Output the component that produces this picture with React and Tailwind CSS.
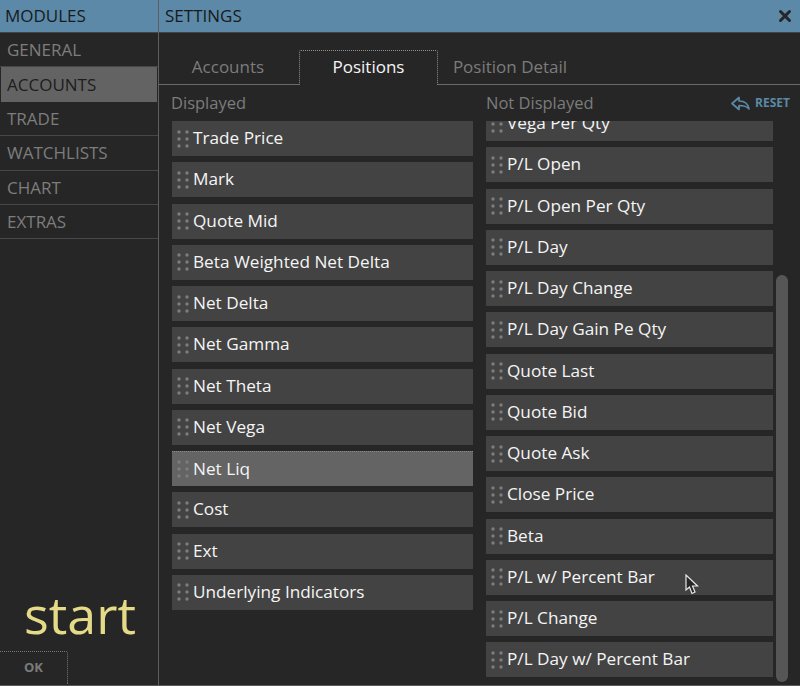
import { X } from "lucide-react";

const modules = ["GENERAL", "ACCOUNTS", "TRADE", "WATCHLISTS", "CHART", "EXTRAS"];
const displayed = [
  "Trade Price",
  "Mark",
  "Quote Mid",
  "Beta Weighted Net Delta",
  "Net Delta",
  "Net Gamma",
  "Net Theta",
  "Net Vega",
  "Net Liq",
  "Cost",
  "Ext",
  "Underlying Indicators",
];
const notDisplayed = [
  "Vega Per Qty",
  "P/L Open",
  "P/L Open Per Qty",
  "P/L Day",
  "P/L Day Change",
  "P/L Day Gain Pe Qty",
  "Quote Last",
  "Quote Bid",
  "Quote Ask",
  "Close Price",
  "Beta",
  "P/L w/ Percent Bar",
  "P/L Change",
  "P/L Day w/ Percent Bar",
];

function Grip() {
  return (
    <svg width="12" height="18" viewBox="0 0 12 18" className="shrink-0 fill-[#7d7d7d]">
      {[2, 9, 16].map((y) => (
        <g key={y}>
          <circle cx="2" cy={y} r="1.7" />
          <circle cx="10" cy={y} r="1.7" />
        </g>
      ))}
    </svg>
  );
}

function Row({ label, active }) {
  return (
    <div
      className={`flex h-[35px] shrink-0 items-center gap-[4px] pl-[5px] text-[17.2px] text-[#f5f5f5] ${
        active ? "border-t border-dotted border-[#8a8a8a] bg-[#646464]" : "bg-[#434343]"
      }`}
    >
      <Grip />
      <span className="whitespace-nowrap pb-px">{label}</span>
    </div>
  );
}

function Tab({ label, active, width }) {
  return (
    <div
      className={`flex h-[34px] items-center justify-center text-[17px] ${width} ${
        active
          ? "relative -mb-px h-[35px] rounded-t-[2px] border border-b-0 border-dotted border-[#8f8f8f] bg-[#262626] pb-[2px] text-[#f5f5f5]"
          : "text-[#7c7c7c]"
      }`}
    >
      {label}
    </div>
  );
}

export default function App() {
  return (
    <div
      className="flex h-[686px] w-[800px] overflow-hidden border-b border-[#5a5a5a] bg-[#262626]"
      style={{ fontFamily: '"Open Sans", sans-serif' }}
    >
      <aside className="flex w-[159px] shrink-0 flex-col border-r border-[#5f5f5f]">
        <div className="flex h-[33px] shrink-0 items-center border-b border-[#444] bg-[#5b89a7] pl-[5px] text-[17px] text-[#171b1e]">
          MODULES
        </div>
        <nav className="flex flex-col">
          {modules.map((name) => (
            <div
              key={name}
              className={
                name === "ACCOUNTS"
                  ? "mx-px flex h-[34.4px] items-center bg-[#636363] pl-[6px] text-[17px] text-[#1d1d1d]"
                  : "flex h-[34.4px] items-center border-b border-[#474747] pl-[7px] text-[17px] text-[#7d7d7d]"
              }
            >
              {name}
            </div>
          ))}
        </nav>
        <div className="mt-auto pb-[11px] pl-[2px] text-center text-[52px] leading-none text-[#e4da87]">
          start
        </div>
        <button
          type="button"
          className="mb-px flex h-[33px] w-[68px] items-center justify-center rounded-tr-[2px] border-r border-t border-dotted border-[#777] text-[13px] font-bold text-[#7b7b7b]"
        >
          OK
        </button>
      </aside>

      <main className="flex min-w-0 flex-1 flex-col">
        <div className="flex h-[33px] shrink-0 items-center justify-between border-b border-[#444] bg-[#5b89a7] pl-[6px] pr-[6px] text-[17px] text-[#171b1e]">
          SETTINGS
          <X size={18} strokeWidth={4} className="text-[#262626]" />
        </div>

        <div className="mt-[16px] flex h-[36px] shrink-0 items-end border-b border-[#6a6a6a]">
          <Tab label="Accounts" width="w-[140px] pr-[2px]" />
          <Tab label="Positions" active width="w-[139px]" />
          <Tab label="Position Detail" width="w-[144px]" />
        </div>

        <div className="flex min-h-0 flex-1 pl-[13px]">
          <section className="flex w-[302px] shrink-0 flex-col">
            <div className="-ml-px flex h-[36px] shrink-0 items-center text-[16.5px] text-[#7c7c7c]">
              Displayed
            </div>
            <div className="flex w-[301px] flex-col gap-[6.25px]">
              {displayed.map((item) => (
                <Row key={item} label={item} active={item === "Net Liq"} />
              ))}
            </div>
          </section>

          <section className="relative ml-[12px] flex min-w-0 flex-1 flex-col">
            <div className="flex h-[36px] shrink-0 items-center justify-between pr-[10px]">
              <span className="text-[16.5px] text-[#7c7c7c]">Not Displayed</span>
              <span className="flex items-center gap-[5px] text-[12px] font-bold text-[#5b89a7]">
                <svg width="19" height="15" viewBox="0 0 19 15" fill="none" stroke="#5b89a7" strokeWidth="1.7" strokeLinejoin="round">
                  <path d="M1 7.5 8 1.5V5C13 5 17 7 18 13C16 10.5 13 9.5 8 9.5V13.5Z" />
                </svg>
                RESET
              </span>
            </div>
            <div className="min-h-0 flex-1 overflow-hidden pb-[6px]">
              <div className="mt-[-15px] flex w-[287px] flex-col gap-[6.25px]">
                {notDisplayed.map((item) => (
                  <Row key={item} label={item} />
                ))}
              </div>
            </div>
            <div className="absolute bottom-[3px] right-[12px] top-[190px] w-[12px] rounded-full bg-[#565656]" />
          </section>
        </div>
      </main>

      {/* mouse pointer from the capture */}
      <svg width="14" height="22" viewBox="0 0 14 22" className="absolute left-[685px] top-[574px]" fill="#262626" stroke="#e8e8e8" strokeWidth="1.2">
        <path d="M1 1V16L4.5 13L7 19.5L10 18L7.5 12H12.5Z" />
      </svg>
    </div>
  );
}
